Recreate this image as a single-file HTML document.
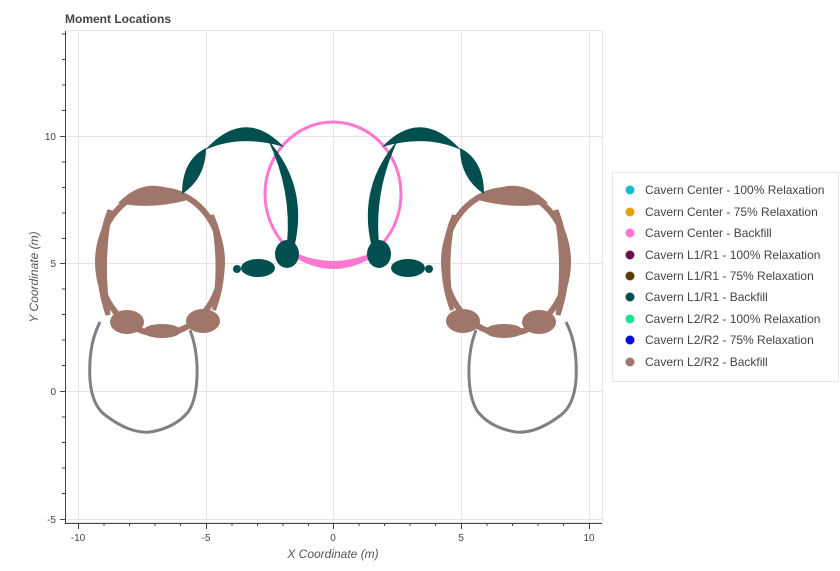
<!DOCTYPE html>
<html><head><style>
body{margin:0;background:#fff;width:840px;height:566px;overflow:hidden;font-family:"Liberation Sans",sans-serif}
</style></head><body>
<svg width="840" height="566" viewBox="0 0 840 566" xmlns="http://www.w3.org/2000/svg" font-family="Liberation Sans, sans-serif">
<text x="65" y="23" font-size="12" font-weight="bold" fill="#444">Moment Locations</text>
<rect x="65.5" y="30.5" width="537" height="492" fill="none" stroke="#e5e5e5"/>
<g stroke="#e5e5e5" stroke-width="1">
<line x1="78.5" y1="30" x2="78.5" y2="523"/><line x1="206.5" y1="30" x2="206.5" y2="523"/>
<line x1="333.5" y1="30" x2="333.5" y2="523"/><line x1="461.5" y1="30" x2="461.5" y2="523"/>
<line x1="589.5" y1="30" x2="589.5" y2="523"/>
<line x1="65" y1="136.5" x2="602" y2="136.5"/><line x1="65" y1="263.5" x2="602" y2="263.5"/>
<line x1="65" y1="391.5" x2="602" y2="391.5"/><line x1="65" y1="519.5" x2="602" y2="519.5"/>
</g>
<g stroke="#444" stroke-width="1">
<line x1="65.5" y1="31" x2="65.5" y2="523"/>
<line x1="65" y1="523.5" x2="602" y2="523.5"/>
<g>
<line x1="60" y1="136.5" x2="65" y2="136.5"/><line x1="60" y1="263.5" x2="65" y2="263.5"/><line x1="60" y1="391.5" x2="65" y2="391.5"/><line x1="60" y1="519.5" x2="65" y2="519.5"/>
<line x1="62" y1="34" x2="65" y2="34"/><line x1="62" y1="59.5" x2="65" y2="59.5"/><line x1="62" y1="85" x2="65" y2="85"/><line x1="62" y1="110.5" x2="65" y2="110.5"/>
<line x1="62" y1="162" x2="65" y2="162"/><line x1="62" y1="187.5" x2="65" y2="187.5"/><line x1="62" y1="213" x2="65" y2="213"/><line x1="62" y1="238.5" x2="65" y2="238.5"/>
<line x1="62" y1="289" x2="65" y2="289"/><line x1="62" y1="314.5" x2="65" y2="314.5"/><line x1="62" y1="340" x2="65" y2="340"/><line x1="62" y1="365.5" x2="65" y2="365.5"/>
<line x1="62" y1="417" x2="65" y2="417"/><line x1="62" y1="442.5" x2="65" y2="442.5"/><line x1="62" y1="468" x2="65" y2="468"/><line x1="62" y1="493.5" x2="65" y2="493.5"/>
<line x1="78.5" y1="523" x2="78.5" y2="529"/><line x1="206.5" y1="523" x2="206.5" y2="529"/><line x1="333.5" y1="523" x2="333.5" y2="529"/><line x1="461.5" y1="523" x2="461.5" y2="529"/><line x1="589.5" y1="523" x2="589.5" y2="529"/>
<line x1="104" y1="523" x2="104" y2="526"/><line x1="129.5" y1="523" x2="129.5" y2="526"/><line x1="155" y1="523" x2="155" y2="526"/><line x1="180.5" y1="523" x2="180.5" y2="526"/>
<line x1="232" y1="523" x2="232" y2="526"/><line x1="257.5" y1="523" x2="257.5" y2="526"/><line x1="283" y1="523" x2="283" y2="526"/><line x1="308.5" y1="523" x2="308.5" y2="526"/>
<line x1="359" y1="523" x2="359" y2="526"/><line x1="384.5" y1="523" x2="384.5" y2="526"/><line x1="410" y1="523" x2="410" y2="526"/><line x1="435.5" y1="523" x2="435.5" y2="526"/>
<line x1="487" y1="523" x2="487" y2="526"/><line x1="512.5" y1="523" x2="512.5" y2="526"/><line x1="538" y1="523" x2="538" y2="526"/><line x1="563.5" y1="523" x2="563.5" y2="526"/>
</g></g>
<g font-size="10" fill="#444" text-anchor="end">
<text x="56" y="140">10</text><text x="56" y="267">5</text><text x="56" y="395">0</text><text x="56" y="523">-5</text>
</g>
<g font-size="10" fill="#444" text-anchor="middle">
<text x="78" y="541">-10</text><text x="206" y="541">-5</text><text x="333" y="541">0</text><text x="461" y="541">5</text><text x="589" y="541">10</text>
</g>
<text x="333" y="558" font-size="12" font-style="italic" fill="#555" text-anchor="middle">X Coordinate (m)</text>
<text transform="translate(38,277) rotate(-90)" font-size="12" font-style="italic" fill="#555" text-anchor="middle">Y Coordinate (m)</text>

<ellipse cx="333" cy="194" rx="68" ry="72" fill="none" stroke="#ff77d0" stroke-width="3"/>
<path d="M293,254 Q333,280 374,254 Q333,272 293,254Z" fill="#ff77d0" stroke="#ff77d0" stroke-width="4"/>

<g id="L">
<path d="M100,322 Q88,345 90,380 Q92,405 105,415 Q130,434 150,432 Q175,428 188,412 Q198,398 197,365 Q196,345 190,330" fill="none" stroke="#808080" stroke-width="3"/>
<ellipse cx="160" cy="262" rx="62" ry="72" fill="none" stroke="#a0756a" stroke-width="6"/>
<path d="M110,210 Q90,262 108,315 Q100,262 110,210Z" fill="#a0756a" stroke="#a0756a" stroke-width="5"/>
<path d="M212,215 Q232,262 214,310 Q222,262 212,215Z" fill="#a0756a" stroke="#a0756a" stroke-width="4"/>
<path d="M118,203 Q150,170 188,200 Q150,210 118,203Z" fill="#a0756a"/>
<ellipse cx="127" cy="322" rx="17" ry="12" fill="#a0756a"/>
<ellipse cx="162" cy="331" rx="19" ry="7" fill="#a0756a"/>
<ellipse cx="203" cy="321" rx="17" ry="12" fill="#a0756a"/>
<path d="M205,150 Q245,106 284,147 Q240,134 205,150Z" fill="#01504f"/>
<path d="M206,148 Q182,160 182,194 Q206,178 206,148Z" fill="#01504f"/>
<path d="M268,140 Q308,185 295,244 L287,244 Q292,190 268,140Z" fill="#01504f"/>
<ellipse cx="287" cy="254" rx="12" ry="14" fill="#01504f"/>
<ellipse cx="258" cy="268" rx="17" ry="9" fill="#01504f"/>
<ellipse cx="237" cy="269" rx="4" ry="4" fill="#01504f"/>
</g>
<use href="#L" transform="translate(666,0) scale(-1,1)"/>

<rect x="612.5" y="172.5" width="226" height="209" fill="#fff" stroke="#e5e5e5"/>
<g font-size="12" fill="#444">
<circle cx="630" cy="190" r="4.5" fill="#17becf"/><text x="645" y="194">Cavern Center - 100% Relaxation</text>
<circle cx="630" cy="212" r="4.5" fill="#e8a10a"/><text x="645" y="216">Cavern Center - 75% Relaxation</text>
<circle cx="630" cy="233" r="4.5" fill="#ff77d0"/><text x="645" y="237">Cavern Center - Backfill</text>
<circle cx="630" cy="255" r="4.5" fill="#6a0f4d"/><text x="645" y="259">Cavern L1/R1 - 100% Relaxation</text>
<circle cx="630" cy="276" r="4.5" fill="#5a3d05"/><text x="645" y="280">Cavern L1/R1 - 75% Relaxation</text>
<circle cx="630" cy="297" r="4.5" fill="#01504f"/><text x="645" y="301">Cavern L1/R1 - Backfill</text>
<circle cx="630" cy="319" r="4.5" fill="#1de28f"/><text x="645" y="323">Cavern L2/R2 - 100% Relaxation</text>
<circle cx="630" cy="340" r="4.5" fill="#0a0ae0"/><text x="645" y="344">Cavern L2/R2 - 75% Relaxation</text>
<circle cx="630" cy="362" r="4.5" fill="#a0756a"/><text x="645" y="366">Cavern L2/R2 - Backfill</text>
</g>
</svg>
</body></html>
